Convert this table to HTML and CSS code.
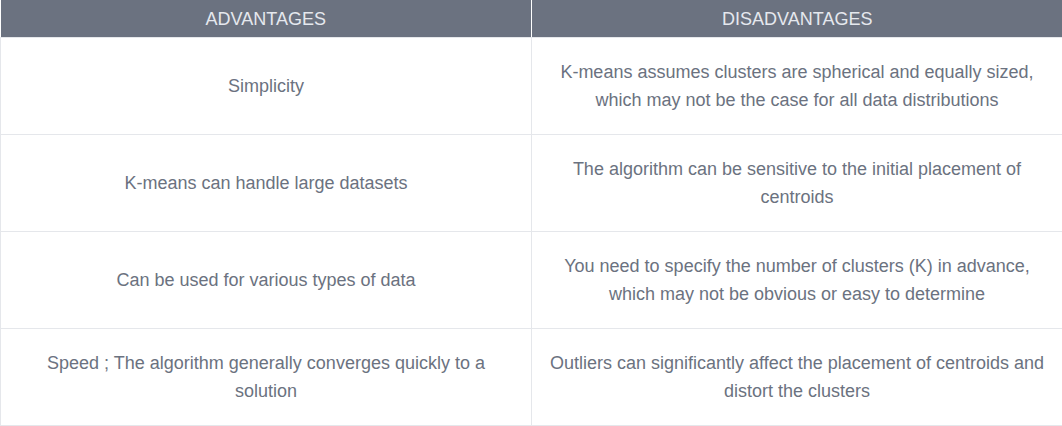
FILE: index.html
```html
<!DOCTYPE html>
<html>
<head>
<meta charset="utf-8">
<link rel="stylesheet" href="styles.css">
</head>
<body>
<table class="compare">
  <colgroup><col class="col-a"><col class="col-b"></colgroup>
  <thead>
    <tr><th>ADVANTAGES</th><th>DISADVANTAGES</th></tr>
  </thead>
  <tbody>
    <tr>
      <td>Simplicity</td>
      <td>K-means assumes clusters are spherical and equally sized,<br>which may not be the case for all data distributions</td>
    </tr>
    <tr>
      <td>K-means can handle large datasets</td>
      <td>The algorithm can be sensitive to the initial placement of<br>centroids</td>
    </tr>
    <tr>
      <td>Can be used for various types of data</td>
      <td>You need to specify the number of clusters (K) in advance,<br>which may not be obvious or easy to determine</td>
    </tr>
    <tr>
      <td>Speed ; The algorithm generally converges quickly to a<br>solution</td>
      <td>Outliers can significantly affect the placement of centroids and<br>distort the clusters</td>
    </tr>
  </tbody>
</table>
</body>
</html>
```
FILE: styles.css
```css
html, body {
  margin: 0;
  padding: 0;
  background: #ffffff;
}
.compare {
  width: 1062px;
  border-collapse: collapse;
  table-layout: fixed;
  font-family: "Liberation Sans", Arial, sans-serif;
  font-size: 18px;
}
.col-a { width: 531px; }
.col-b { width: 531px; }
.compare th {
  background: #6b7280;
  color: #e5e8ee;
  font-weight: normal;
  line-height: 28px;
  height: 28px;
  padding: 5px 8px 4px;
  text-align: center;
  border-left: 1px solid #ffffff;
  border-bottom: 1px solid #e5e7eb;
}
.compare th:first-child { border-left: none; }
.compare td {
  color: #6b7280;
  line-height: 28px;
  height: 56px;
  padding: 20px 8px;
  text-align: center;
  vertical-align: middle;
  border: 1px solid #e5e7eb;
}
```
